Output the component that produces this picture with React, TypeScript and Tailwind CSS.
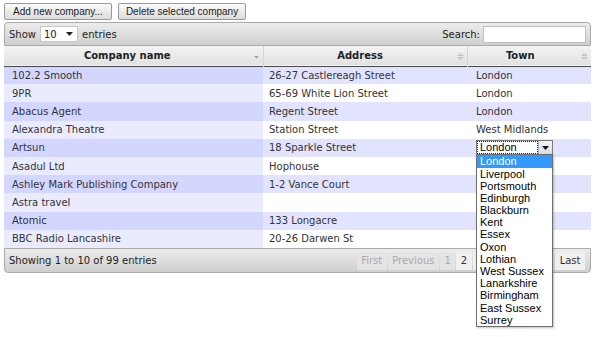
import React from "react";

const rows = [
  ["102.2 Smooth", "26-27 Castlereagh Street", "London"],
  ["9PR", "65-69 White Lion Street", "London"],
  ["Abacus Agent", "Regent Street", "London"],
  ["Alexandra Theatre", "Station Street", "West Midlands"],
  ["Artsun", "18 Sparkle Street", null],
  ["Asadul Ltd", "Hophouse", ""],
  ["Ashley Mark Publishing Company", "1-2 Vance Court", ""],
  ["Astra travel", "", ""],
  ["Atomic", "133 Longacre", ""],
  ["BBC Radio Lancashire", "20-26 Darwen St", ""],
];

const towns = [
  "London",
  "Liverpool",
  "Portsmouth",
  "Edinburgh",
  "Blackburn",
  "Kent",
  "Essex",
  "Oxon",
  "Lothian",
  "West Sussex",
  "Lanarkshire",
  "Birmingham",
  "East Sussex",
  "Surrey",
];

const pages = [
  { label: "First", off: true },
  { label: "Previous", off: true },
  { label: "1", off: true },
  { label: "2" },
  { label: "3" },
  { label: "4" },
  { label: "5" },
  { label: "Next" },
  { label: "Last" },
];

function SortIcon({ both }: { both?: boolean }) {
  return (
    <svg width="7" height="9" viewBox="0 0 7 9" className="absolute right-[3px] top-[6px]">
      {both ? (
        <>
          <path d="M3.5 1 L6 3.5 L1 3.5 Z" fill="none" stroke="#b5b5b5" strokeWidth="0.8" />
          <path d="M3.5 8 L6 5.5 L1 5.5 Z" fill="none" stroke="#b5b5b5" strokeWidth="0.8" />
        </>
      ) : (
        <path d="M1 4 L6 4 L3.5 6.5 Z" fill="#a0a0a0" />
      )}
    </svg>
  );
}

function TownEditor() {
  return (
    <div className="relative h-[15px] w-[77px]">
      <div className="flex h-[15px] w-[77px] items-center border border-[#7a7a7a] bg-white">
        <div className="flex h-[13px] flex-1 items-center border border-dotted border-[#222] pl-[2px] text-[11px] leading-none text-black [font-family:'Liberation_Sans',Arial,sans-serif]">
          London
        </div>
        <div className="flex h-[13px] w-[14px] items-center justify-center border-l border-[#a8b0bc] bg-gradient-to-b from-[#f2f4f8] to-[#d8dde6]">
          <svg width="7" height="4" viewBox="0 0 7 4">
            <path d="M0 0 L7 0 L3.5 4 Z" fill="#111" />
          </svg>
        </div>
      </div>
      <div className="absolute left-0 top-[14px] z-10 w-[77px] border border-[#6e6e6e] bg-white shadow-[1px_1px_2px_rgba(0,0,0,0.25)] [font-family:'Liberation_Sans',Arial,sans-serif]">
        {towns.map((t, i) => (
          <div
            key={t}
            className={
              "h-[12.2px] pl-[3px] text-[11px] leading-[12.2px] " +
              (i === 0 ? "bg-[#3399ff] text-white" : "text-black")
            }
          >
            {t}
          </div>
        ))}
      </div>
    </div>
  );
}

export default function App() {
  return (
    <div className="h-[337px] w-[600px] bg-white text-[#333] [font-family:'DejaVu_Sans',Verdana,sans-serif]">
      <div className="flex gap-[6px] pl-[4px] pt-[3px]">
        <button className="h-[17px] rounded-[2px] border border-[#9a9a9a] bg-gradient-to-b from-[#fafafa] to-[#dcdcdc] px-[8px] text-[10px] leading-none text-[#222] [font-family:'Liberation_Sans',Arial,sans-serif]">
          Add new company...
        </button>
        <button className="h-[17px] rounded-[2px] border border-[#9a9a9a] bg-gradient-to-b from-[#fafafa] to-[#dcdcdc] px-[7px] text-[10px] leading-none text-[#222] [font-family:'Liberation_Sans',Arial,sans-serif]">
          Delete selected company
        </button>
      </div>

      <div className="ml-[4px] mt-[2px] w-[587px]">
        <div className="flex h-[24px] items-center justify-between rounded-t-[4px] border border-[#aaa] bg-gradient-to-b from-[#ececec] to-[#cfcfcf] px-[4px] text-[10px] text-[#222]">
          <div className="flex items-center gap-[4px]">
            <span>Show</span>
            <div className="flex h-[16px] w-[38px] items-center justify-between border border-[#c8c8c8] bg-white pl-[3px] pr-[4px]">
              <span>10</span>
              <svg width="7" height="4" viewBox="0 0 7 4">
                <path d="M0 0 L7 0 L3.5 4 Z" fill="#222" />
              </svg>
            </div>
            <span>entries</span>
          </div>
          <div className="flex items-center gap-[3px]">
            <span>Search:</span>
            <div className="h-[17px] w-[103px] border border-[#c0c0c0] bg-white" />
          </div>
        </div>

        <table className="w-[587px] table-fixed border-collapse text-[10px]">
          <colgroup>
            <col className="w-[259px]" />
            <col className="w-[204px]" />
            <col className="w-[124px]" />
          </colgroup>
          <thead>
            <tr className="h-[20px] border-b border-[#4a4a4a] bg-gradient-to-b from-[#f3f3f3] to-[#e2e2e2]">
              <th className="relative border-r border-[#d5d5d5] pr-[12px] font-bold text-[#222]">
                Company name
                <SortIcon />
              </th>
              <th className="relative border-r border-[#d5d5d5] pr-[10px] font-bold text-[#222]">
                Address
                <SortIcon both />
              </th>
              <th className="relative pr-[18px] font-bold text-[#222]">
                Town
                <SortIcon both />
              </th>
            </tr>
          </thead>
          <tbody>
            {rows.map((r, i) => {
              const odd = i % 2 === 0;
              return (
                <tr key={r[0] as string} className={"h-[18.2px] " + (odd ? "bg-[#e2e4ff]" : "bg-white")}>
                  <td className={"pl-[8px] " + (odd ? "bg-[#d3d6ff]" : "bg-[#eaebff]")}>{r[0]}</td>
                  <td className="pl-[6px]">{r[1]}</td>
                  <td className="pl-[9px]">{r[2] === null ? <TownEditor /> : r[2]}</td>
                </tr>
              );
            })}
          </tbody>
        </table>

        <div className="flex h-[25px] items-center justify-between rounded-b-[4px] border border-[#aaa] bg-gradient-to-b from-[#ececec] to-[#cfcfcf] pl-[4px] pr-[5px] pt-[1px] text-[10px] text-[#222]">
          <span>Showing 1 to 10 of 99 entries</span>
          <div className="flex h-[18px] items-stretch gap-[1px]">
            {pages.map((p) => (
              <span
                key={p.label}
                className={
                  "flex items-center px-[4.5px] " +
                  (p.off ? "bg-[#e4e4e4] text-[#aaa]" : "bg-[#f0f0f0] text-[#333]")
                }
              >
                {p.label}
              </span>
            ))}
          </div>
        </div>
      </div>
    </div>
  );
}
